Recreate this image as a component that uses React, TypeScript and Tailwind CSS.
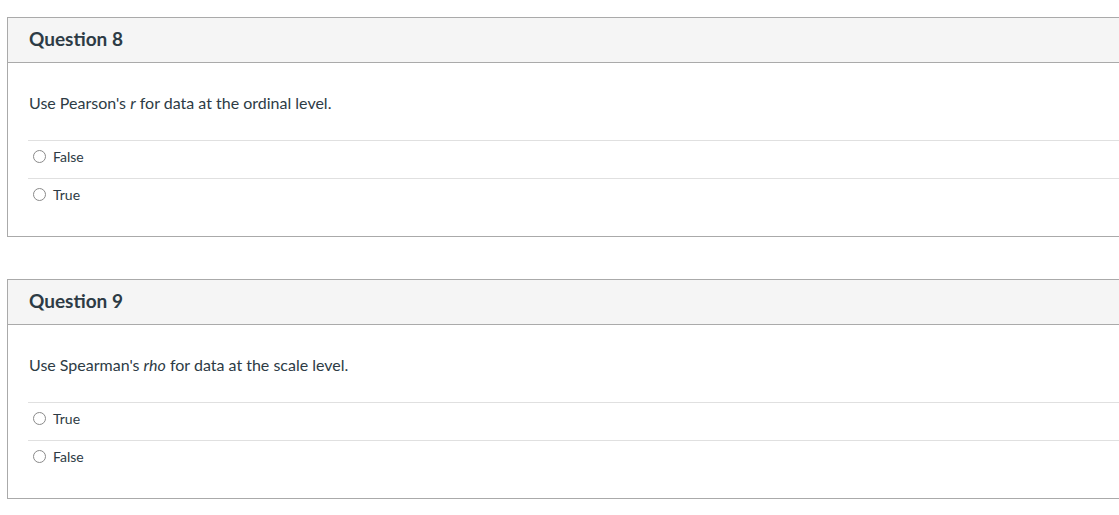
import React from 'react';

interface Question {
  number: number;
  prompt: React.ReactNode;
  options: string[];
}

const QUESTIONS: Question[] = [
  {
    number: 8,
    prompt: (
      <>
        Use Pearson's <em>r</em> for data at the ordinal level.
      </>
    ),
    options: ['False', 'True'],
  },
  {
    number: 9,
    prompt: (
      <>
        Use Spearman's <em>rho</em> for data at the scale level.
      </>
    ),
    options: ['True', 'False'],
  },
];

const QuestionCard: React.FC<{ q: Question }> = ({ q }) => (
  <div className="border border-r-0 border-[#aaaaaa] bg-white">
    <div className="h-[45px] bg-[#f5f5f5] border-b border-[#aaaaaa] px-[21px] pb-[4px] flex items-center">
      <h2 className="text-[19px] font-bold text-[#2d3b45] leading-none">Question {q.number}</h2>
    </div>
    <div className="pl-[20px] pt-[30px] pb-[20px]">
      <p className="text-[16px] leading-[20px] text-[#2d3b45] pl-[1px]">{q.prompt}</p>
      <div className="mt-[27px]">
        {q.options.map((opt) => (
          <label
            key={opt}
            className="h-[38px] border-t border-[#e0e0e0] flex items-center gap-[7px] pl-[5px] pb-[6px] text-[14px] text-[#2d3b45]"
          >
            <span className="w-[13px] h-[13px] rounded-full border border-[#8a8a8a] bg-white" />
            <span>{opt}</span>
          </label>
        ))}
      </div>
    </div>
  </div>
);

export default function App() {
  return (
    <div className="min-h-screen bg-white pl-[7px] pt-[17px] font-['Lato',_sans-serif]">
      <div className="flex flex-col gap-[42px]">
        {QUESTIONS.map((q) => (
          <QuestionCard key={q.number} q={q} />
        ))}
      </div>
    </div>
  );
}
